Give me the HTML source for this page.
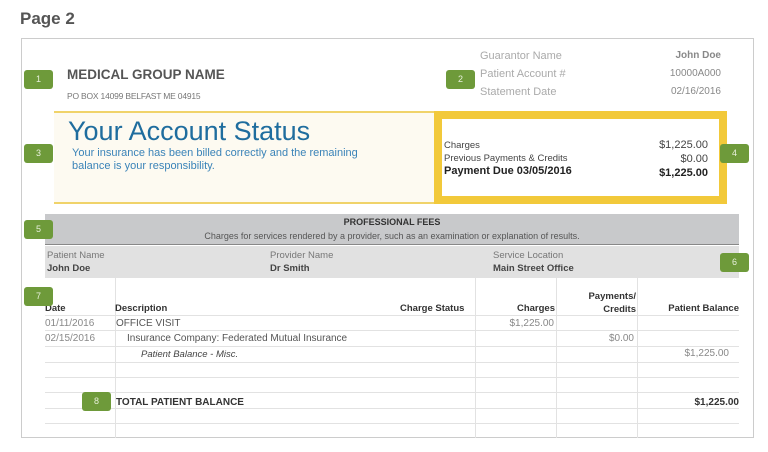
<!DOCTYPE html>
<html><head><style>
*{margin:0;padding:0;box-sizing:border-box}
body{width:768px;height:452px;background:#fff;font-family:"Liberation Sans",sans-serif;position:relative;overflow:hidden;color:#333}
.a{position:absolute;white-space:nowrap}
.b{position:absolute;background:#6e9a3a;color:#e8f0dc;font-size:9px;text-align:center;line-height:19px;border-radius:3px;width:29px;height:19px}
.hl{position:absolute;height:1px;background:#e2e2e2}
.vl{position:absolute;width:1px;background:#e2e2e2}
.g{color:#888;font-size:10px}
.bd{font-weight:bold;font-size:10px;color:#333}
</style></head><body>
<div class="a" style="left:20px;top:9px;font-size:17px;font-weight:bold;color:#555">Page 2</div>
<div class="a" style="left:21px;top:38px;width:733px;height:400px;border:1px solid #ccc"></div>
<div class="a" style="left:67px;top:67px;font-size:13.5px;font-weight:bold;color:#555">MEDICAL GROUP NAME</div>
<div class="a" style="left:67px;top:91px;font-size:8.5px;color:#777;letter-spacing:-0.2px">PO BOX 14099 BELFAST ME 04915</div>
<div class="a" style="left:480px;top:47px;font-size:11px;color:#aaa;line-height:18px">Guarantor Name<br>Patient Account #<br>Statement Date</div>
<div class="a" style="left:600px;top:47px;width:121px;text-align:right;font-size:10px;color:#888;line-height:18px"><b>John Doe</b><br>10000A000<br>02/16/2016</div>
<div class="a" style="left:54px;top:111px;width:380px;height:93px;background:#fdfaf1;border-top:2px solid #f0d36a;border-bottom:2px solid #f0d36a"></div>
<div class="a" style="left:68px;top:116px;font-size:27px;color:#1f6d9e">Your Account Status</div>
<div class="a" style="left:72px;top:147px;font-size:11px;color:#3a83b8;line-height:13px">Your insurance has been billed correctly and the remaining<br>balance is your responsibility.</div>
<div class="a" style="left:434px;top:111px;width:293px;height:93px;border:8px solid #f2c93a;background:#fff"></div>
<div class="a" style="left:444px;top:139px;font-size:9.5px;color:#444;line-height:13px">Charges<br>Previous Payments &amp; Credits<br><b style="font-size:11px;color:#222">Payment Due 03/05/2016</b></div>
<div class="a" style="left:600px;top:138px;width:108px;text-align:right;font-size:11px;color:#444;line-height:14px">$1,225.00<br>$0.00<br><b style="color:#222">$1,225.00</b></div>
<div class="a" style="left:45px;top:214px;width:694px;height:31px;background:#c8c9cb;border-bottom:1px solid #888"></div>
<div class="a" style="left:45px;top:217px;width:694px;text-align:center;font-size:9px;font-weight:bold;color:#333">PROFESSIONAL FEES</div>
<div class="a" style="left:45px;top:231px;width:694px;text-align:center;font-size:9px;color:#555">Charges for services rendered by a provider, such as an examination or explanation of results.</div>
<div class="a" style="left:45px;top:246px;width:694px;height:32px;background:#e1e1e1"></div>
<div class="a" style="left:47px;top:249px;font-size:9.5px;color:#777;line-height:13px">Patient Name<br><b style="color:#444">John Doe</b></div>
<div class="a" style="left:270px;top:249px;font-size:9.5px;color:#777;line-height:13px">Provider Name<br><b style="color:#444">Dr Smith</b></div>
<div class="a" style="left:493px;top:249px;font-size:9.5px;color:#777;line-height:13px">Service Location<br><b style="color:#444">Main Street Office</b></div>
<div class="vl" style="left:115px;top:278px;height:160px"></div>
<div class="vl" style="left:475px;top:278px;height:160px"></div>
<div class="vl" style="left:556px;top:278px;height:160px"></div>
<div class="vl" style="left:637px;top:278px;height:160px"></div>
<div class="hl" style="left:45px;top:315px;width:694px"></div>
<div class="hl" style="left:45px;top:330px;width:694px"></div>
<div class="hl" style="left:45px;top:346px;width:694px"></div>
<div class="hl" style="left:45px;top:362px;width:694px"></div>
<div class="hl" style="left:45px;top:377px;width:694px"></div>
<div class="hl" style="left:45px;top:392px;width:694px"></div>
<div class="hl" style="left:45px;top:408px;width:694px"></div>
<div class="hl" style="left:45px;top:423px;width:694px"></div>
<div class="a bd" style="left:45px;top:303px;font-size:9.5px">Date</div>
<div class="a bd" style="left:115px;top:303px;font-size:9.5px">Description</div>
<div class="a bd" style="left:400px;top:303px;font-size:9.5px">Charge Status</div>
<div class="a bd" style="left:476px;top:303px;width:79px;text-align:right;font-size:9.5px">Charges</div>
<div class="a bd" style="left:557px;top:290px;width:79px;text-align:right;font-size:9.5px;line-height:13px">Payments/<br>Credits</div>
<div class="a bd" style="left:638px;top:303px;width:101px;text-align:right;font-size:9.5px">Patient Balance</div>
<div class="a g" style="left:45px;top:318px">01/11/2016</div>
<div class="a g" style="left:116px;top:318px;color:#555">OFFICE VISIT</div>
<div class="a g" style="left:476px;top:318px;width:78px;text-align:right">$1,225.00</div>
<div class="a g" style="left:45px;top:333px">02/15/2016</div>
<div class="a g" style="left:127px;top:333px;color:#555">Insurance Company: Federated Mutual Insurance</div>
<div class="a g" style="left:557px;top:333px;width:77px;text-align:right">$0.00</div>
<div class="a g" style="left:141px;top:349px;color:#444;font-style:italic;font-size:9.5px">Patient Balance - Misc.</div>
<div class="a g" style="left:638px;top:348px;width:91px;text-align:right">$1,225.00</div>
<div class="a bd" style="left:116px;top:397px;font-size:10px">TOTAL PATIENT BALANCE</div>
<div class="a bd" style="left:638px;top:397px;width:101px;text-align:right">$1,225.00</div>
<div class="b" style="left:24px;top:70px">1</div>
<div class="b" style="left:446px;top:70px">2</div>
<div class="b" style="left:24px;top:144px">3</div>
<div class="b" style="left:720px;top:144px">4</div>
<div class="b" style="left:24px;top:220px">5</div>
<div class="b" style="left:720px;top:253px">6</div>
<div class="b" style="left:24px;top:287px">7</div>
<div class="b" style="left:82px;top:392px">8</div>
</body></html>
